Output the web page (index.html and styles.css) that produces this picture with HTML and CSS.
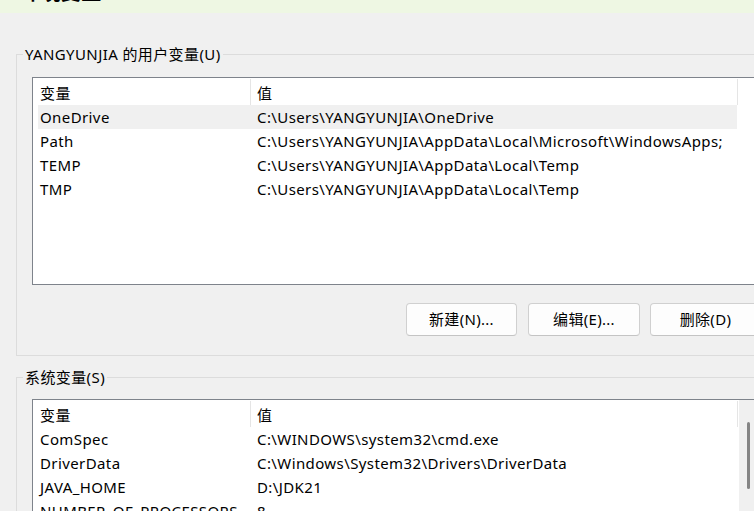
FILE: index.html
```html
<!DOCTYPE html>
<html lang="zh-CN">
<head>
<meta charset="utf-8">
<title>环境变量</title>
<link rel="stylesheet" href="styles.css">
</head>
<body>
<div class="titlebar"><div class="title">环境变量</div></div>

<fieldset class="group group-user">
  <legend>YANGYUNJIA 的用户变量(U)</legend>
  <div class="inner">
    <div class="list list-user">
      <div class="list-main">
        <div class="hdr">
          <div class="hc c1">变量</div>
          <div class="hc c2">值</div>
        </div>
        <div class="row sel"><div class="c1">OneDrive</div><div class="c2">C:\Users\YANGYUNJIA\OneDrive</div></div>
        <div class="row"><div class="c1">Path</div><div class="c2">C:\Users\YANGYUNJIA\AppData\Local\Microsoft\WindowsApps;</div></div>
        <div class="row"><div class="c1">TEMP</div><div class="c2">C:\Users\YANGYUNJIA\AppData\Local\Temp</div></div>
        <div class="row"><div class="c1">TMP</div><div class="c2">C:\Users\YANGYUNJIA\AppData\Local\Temp</div></div>
      </div>
    </div>
    <div class="buttons">
      <button class="btn b-new">新建(N)...</button>
      <button class="btn b-edit">编辑(E)...</button>
      <button class="btn b-del">删除(D)</button>
    </div>
  </div>
</fieldset>

<fieldset class="group group-sys">
  <legend>系统变量(S)</legend>
  <div class="inner">
    <div class="list list-sys">
      <div class="list-main">
        <div class="hdr">
          <div class="hc c1">变量</div>
          <div class="hc c2">值</div>
        </div>
        <div class="row"><div class="c1">ComSpec</div><div class="c2">C:\WINDOWS\system32\cmd.exe</div></div>
        <div class="row"><div class="c1">DriverData</div><div class="c2">C:\Windows\System32\Drivers\DriverData</div></div>
        <div class="row"><div class="c1">JAVA_HOME</div><div class="c2">D:\JDK21</div></div>
        <div class="row"><div class="c1">NUMBER_OF_PROCESSORS</div><div class="c2">8</div></div>
      </div>
      <div class="vscroll"><div class="thumb"></div></div>
    </div>
  </div>
</fieldset>
</body>
</html>
```

FILE: styles.css
```css
html, body {
  margin: 0;
  padding: 0;
  overflow: hidden;
  background: #f0f0f0;
}
body {
  font-family: "Noto Sans", "Noto Sans CJK SC", sans-serif;
  font-size: 15px;
  letter-spacing: 0.4px;
  color: #000;
  width: 754px;
  height: 511px;
}
.titlebar {
  height: 13px;
  overflow: hidden;
  background: #eef7e3;
}
.title {
  font-size: 20px;
  line-height: 20px;
  margin-top: -17px;
  margin-left: 20px;
  font-weight: bold;
}
.group {
  margin: 0 0 0 16px;
  padding: 0 0 0 6px;
  border: 1px solid #dcdcdc;
  width: 780px;
  box-sizing: border-box;
  min-inline-size: 0;
}
.group legend {
  padding: 0 2px;
  line-height: 20px;
  height: 20px;
  white-space: nowrap;
}
.group-user {
  margin-top: 31px;
  padding-bottom: 19px;
}
.group-sys {
  margin-top: 11px;
  height: 200px;
}
.inner {
  margin-left: 9px;
}
.group-user .inner { padding-top: 13px; }
.group-sys .inner { padding-top: 12px; }

.list {
  background: #fff;
  border: 1px solid #7e838b;
  width: 760px;
  box-sizing: border-box;
  display: flex;
}
.list-user { height: 208px; }
.list-sys { height: 140px; }
.list-main {
  width: 706px;
  flex: none;
}
.hdr {
  display: flex;
  height: 27px;
  padding-left: 5px;
}
.hc {
  box-sizing: border-box;
  border-right: 1px solid #e5e5e5;
  margin-top: 1px;
  height: 26px;
  padding-top: 2px;
  line-height: 24px;
}
.c1 {
  width: 213px;
  box-sizing: border-box;
  flex: none;
  padding-left: 2px;
  white-space: nowrap;
  overflow: hidden;
}
.c2 {
  width: 487px;
  box-sizing: border-box;
  flex: none;
  padding-left: 6px;
  white-space: nowrap;
  overflow: hidden;
}
.row {
  display: flex;
  height: 24px;
  line-height: 24px;
  margin-left: 5px;
  width: 699px;
}
.row.sel { background: #f0f0f0; }

.vscroll {
  width: 17px;
  flex: none;
  background: #f0f0f0;
  padding-top: 22px;
  box-sizing: border-box;
}
.thumb {
  width: 3px;
  height: 67px;
  margin-left: 8px;
  background: #858585;
  border-radius: 2px;
}

.buttons {
  display: flex;
  margin-top: 18px;
  padding-left: 374px;
}
.btn {
  font: inherit;
  letter-spacing: 0.3px;
  color: #000;
  height: 33px;
  width: 111px;
  background: #fdfdfd;
  border: 1px solid #d0d0d0;
  border-bottom-color: #c4c4c4;
  border-radius: 4px;
  padding: 0 0 3px;
  flex: none;
}
.b-edit { margin-left: 11px; width: 112px; }
.b-del { margin-left: 10px; }
```
